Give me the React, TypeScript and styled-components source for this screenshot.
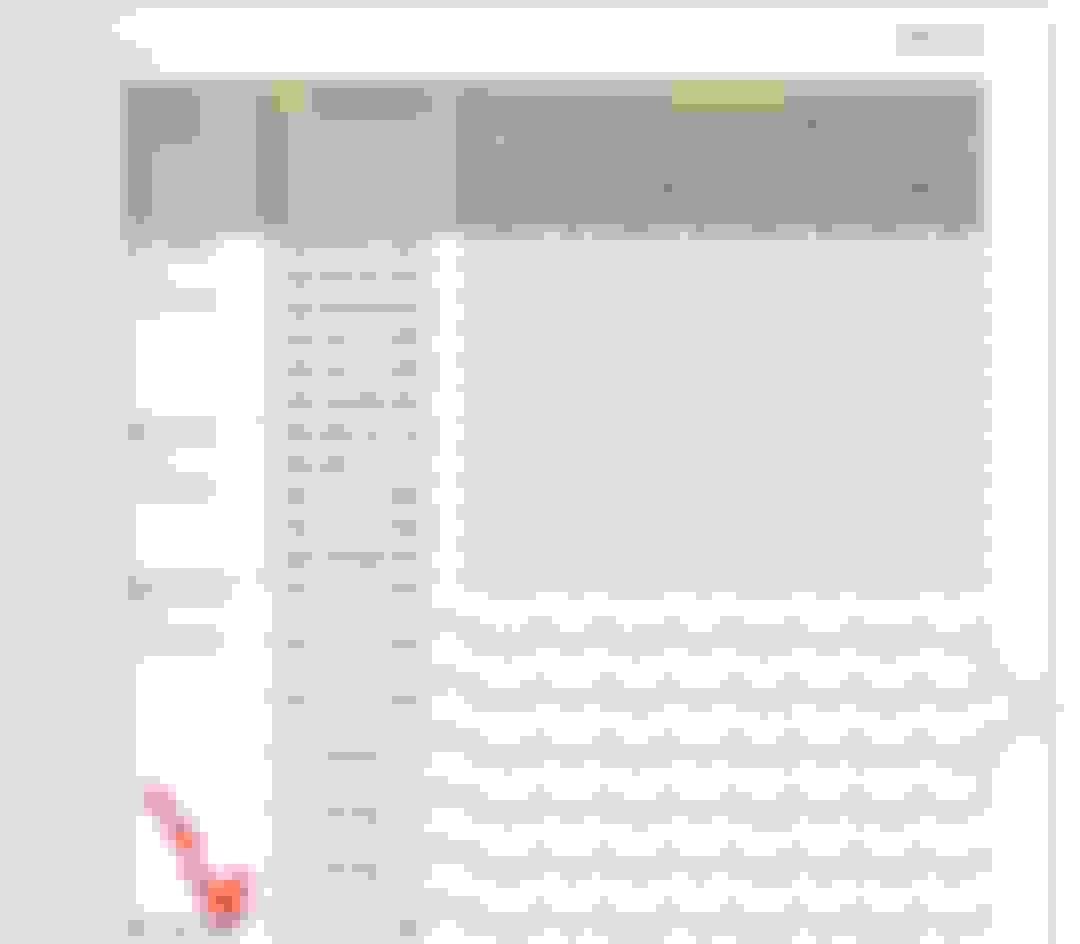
import React from "react";
import styled, { createGlobalStyle } from "styled-components";

type Row = number[];

/* Turns rows of [top, bottom, x0, x1, x2, x3, ...] into a stepped clip path. */
const cut = (rows: Row[], ox = 0, oy = 0): string => {
  let d = "";
  for (const [y0, y1, ...runs] of rows) {
    for (let i = 0; i < runs.length; i += 2) {
      d += `M${runs[i] - ox} ${y0 - oy}H${runs[i + 1] - ox}V${y1 - oy}H${runs[i] - ox}Z`;
    }
  }
  return `path("${d}")`;
};

const GREY = "#e0e0e0";
const MID = "#bebebe";
const DARK = "#a0a0a0";
const DOT = "#808080";

const Global = createGlobalStyle`
  html, body { margin: 0; padding: 0; background: #fff; font-family: "Liberation Sans", Arial, sans-serif; }
`;

const Page = styled.div`
  display: grid;
  grid-template-columns: 1048px 32px;
  width: 1080px;
  height: 944px;
  overflow: hidden;
  background: #fff;
`;

const Workspace = styled.div`
  display: flex;
  flex-direction: column;
  padding-top: 8px;
  background: ${GREY};
`;

const headerClip = cut([
  [0, 8, 24, 936],
  [8, 16, 8, 936],
  [16, 24, 0, 936],
  [24, 32, 8, 936],
  [32, 40, 24, 936],
  [40, 56, 40, 936],
  [56, 64, 48, 936],
]);

const Header = styled.header`
  display: flex;
  justify-content: flex-end;
  align-items: flex-start;
  box-sizing: border-box;
  width: 936px;
  height: 64px;
  margin-left: 112px;
  padding: 16px 64px 0 0;
  background: #fff;
  clip-path: ${headerClip};
`;

const SaveButton = styled.button`
  display: flex;
  align-items: flex-start;
  box-sizing: border-box;
  width: 88px;
  height: 32px;
  padding: 8px 0 0 16px;
  border: 0;
  background: ${GREY};
`;

const ButtonLabel = styled.span`
  display: block;
  width: 16px;
  height: 8px;
  background: ${MID};
`;

const Body = styled.div`
  display: flex;
  flex: 1;
  padding-left: 120px;
`;

const Content = styled.main`
  position: relative;
  display: flex;
  flex-direction: column;
  box-sizing: border-box;
  width: 872px;
  padding-top: 8px;
  &::before {
    content: "";
    position: absolute;
    top: 0;
    right: 0;
    width: 8px;
    height: 8px;
    background: #fff;
  }
`;

const Gutter = styled.div`
  flex: 1;
  background: #fff;
`;

const heroClip = cut(
  [
    [80, 88, 120, 976],
    [88, 232, 120, 984],
    [232, 240, 120, 216, 264, 432, 464, 544, 560, 584, 592, 680, 688, 808, 816, 928, 936, 968],
    [240, 248, 128, 152, 168, 200, 280, 368, 392, 416],
    [248, 256, 128, 136, 296, 304, 400, 408],
  ],
  120,
  80,
);

const Hero = styled.section`
  position: relative;
  z-index: 2;
  display: flex;
  align-items: flex-start;
  box-sizing: border-box;
  width: 864px;
  height: 176px;
  margin-bottom: -16px;
  padding: 8px 0 0 8px;
  background: ${MID};
  clip-path: ${heroClip};
`;

const tileClip = cut([
  [0, 8, 0, 64],
  [8, 48, 0, 72],
  [48, 56, 0, 64],
  [56, 64, 0, 32],
  [64, 128, 0, 24],
  [128, 136, 8, 16],
]);

const HeroPoster = styled.div`
  flex: none;
  width: 72px;
  height: 136px;
  background: ${DARK};
  clip-path: ${tileClip};
`;

const HeroBar = styled.div`
  flex: none;
  width: 32px;
  height: 128px;
  margin: 8px 0 0 56px;
  background: ${DARK};
  clip-path: ${cut([
    [0, 120, 0, 32],
    [120, 128, 8, 32],
  ])};
`;

const HeroTitle = styled.div`
  flex: none;
  width: 120px;
  height: 32px;
  margin-left: 24px;
  background: ${DARK};
  clip-path: ${cut([
    [0, 8, 0, 112],
    [8, 24, 0, 120],
    [24, 32, 8, 104],
  ])};
`;

const mainClip = cut(
  [
    [88, 96, 464, 488],
    [96, 136, 456, 976],
    [136, 152, 456, 968],
    [152, 224, 456, 976],
    [224, 232, 496, 512, 568, 576, 624, 648, 696, 704, 752, 776, 816, 832, 872, 896, 944, 960],
  ],
  456,
  88,
);

const HeroMain = styled.div`
  position: relative;
  flex: none;
  width: 520px;
  height: 144px;
  margin-left: 24px;
  background: ${DARK};
  clip-path: ${mainClip};
`;

const HeroDot = styled.i<{ $x: number; $y: number; $w?: number; $c?: string }>`
  position: absolute;
  left: ${(p) => p.$x}px;
  top: ${(p) => p.$y}px;
  width: ${(p) => p.$w ?? 8}px;
  height: 8px;
  background: ${(p) => p.$c ?? DOT};
`;

const Highlight = styled.div<{ $x: number; $w: number }>`
  position: absolute;
  left: ${(p) => p.$x}px;
  top: 0;
  width: ${(p) => p.$w}px;
  height: 32px;
  background: #c0ca88;
`;

const HighlightShade = styled.i<{ $top: number; $w: string }>`
  position: absolute;
  left: 0;
  bottom: 0;
  width: ${(p) => p.$w};
  height: ${(p) => 32 - p.$top}px;
  background: #a2aa6a;
`;

const Columns = styled.div`
  display: flex;
  flex: 1;
`;

const sideClip = cut(
  [
    [240, 248, 224, 256],
    [248, 256, 216, 264],
    [256, 264, 208, 264],
    [264, 280, 168, 264],
    [280, 288, 176, 264],
    [288, 312, 216, 264],
    [312, 320, 160, 264],
    [320, 408, 136, 264],
    [408, 416, 152, 264],
    [416, 424, 216, 256],
    [424, 448, 216, 264],
    [448, 456, 176, 264],
    [456, 464, 168, 264],
    [464, 472, 176, 264],
    [472, 480, 208, 264],
    [480, 496, 216, 264],
    [496, 504, 208, 264],
    [504, 560, 136, 264],
    [560, 568, 144, 264],
    [568, 576, 224, 256],
    [576, 584, 240, 256],
    [584, 592, 232, 264],
    [592, 600, 232, 272],
    [600, 608, 224, 272],
    [608, 624, 168, 272],
    [624, 632, 216, 272],
    [632, 648, 224, 264],
    [648, 656, 216, 272],
    [656, 664, 144, 272],
    [664, 688, 136, 272],
    [688, 704, 136, 264],
    [704, 744, 136, 272],
    [744, 760, 136, 264],
    [760, 776, 136, 272],
    [776, 784, 160, 272],
    [784, 800, 176, 272],
    [800, 808, 184, 264],
    [808, 816, 192, 264],
    [816, 832, 200, 272, 136, 152],
    [832, 848, 208, 272, 136, 160],
    [848, 856, 208, 272, 136, 168],
    [856, 864, 208, 264, 136, 176],
    [864, 872, 256, 264, 136, 176],
    [872, 880, 136, 176],
    [880, 888, 136, 184],
    [888, 896, 136, 184, 264, 272],
    [896, 904, 136, 192],
    [904, 912, 144, 192],
    [920, 928, 256, 264],
    [928, 936, 248, 264],
    [936, 944, 240, 272],
  ],
  120,
  240,
);

const Sidebar = styled.aside`
  position: relative;
  display: flex;
  flex-direction: column;
  align-items: flex-start;
  flex: none;
  box-sizing: border-box;
  width: 152px;
  padding-left: 8px;
  &::before {
    content: "";
    position: absolute;
    inset: 0;
    background: #fff;
    clip-path: ${sideClip};
  }
`;

const SideMark = styled.span<{ $top: number }>`
  position: relative;
  width: 16px;
  height: 16px;
  margin-top: ${(p) => p.$top}px;
  background: ${MID};
`;

const SideGlyph = styled.span<{ $top: number }>`
  position: relative;
  width: 24px;
  height: 24px;
  margin-top: ${(p) => p.$top}px;
  background: ${MID};
  clip-path: ${cut([
    [0, 8, 0, 8],
    [8, 16, 0, 24],
    [16, 24, 0, 16],
  ])};
`;

const TrailLayer = styled.svg`
  position: absolute;
  left: 24px;
  top: 544px;
  width: 112px;
  height: 152px;
  shape-rendering: crispEdges;
`;

const P = {
  v: "#ffe4f6",
  l: "#ffc8e0",
  m: "#e8a8c0",
  d: "#c88aa0",
  o: "#ff8066",
  a: "#ff9a80",
  x: "#d85f48",
  g: MID,
};

const trail: [number, keyof typeof P, number, number][] = [
  [784, "l", 144, 168], [784, "v", 168, 176],
  [792, "m", 144, 168], [792, "l", 168, 176],
  [800, "m", 144, 176],
  [808, "l", 144, 152], [808, "m", 152, 176],
  [816, "m", 160, 184], [816, "l", 184, 192],
  [824, "l", 160, 168], [824, "m", 168, 176], [824, "d", 176, 184], [824, "m", 184, 192],
  [832, "l", 160, 168], [832, "m", 168, 176], [832, "o", 176, 184], [832, "a", 184, 192], [832, "m", 192, 200], [832, "l", 200, 208],
  [840, "v", 160, 168], [840, "l", 168, 176], [840, "a", 176, 184], [840, "o", 184, 192], [840, "m", 192, 200], [840, "l", 200, 208],
  [848, "m", 176, 200], [848, "l", 200, 208],
  [856, "l", 176, 184], [856, "m", 184, 200], [856, "l", 200, 208],
  [864, "l", 176, 184], [864, "m", 184, 208], [864, "l", 208, 216], [864, "v", 216, 224], [864, "l", 224, 248], [864, "v", 248, 256],
  [872, "l", 176, 184], [872, "m", 184, 216], [872, "l", 216, 232], [872, "m", 232, 248], [872, "l", 248, 256],
  [880, "m", 192, 200], [880, "d", 200, 208], [880, "a", 208, 224], [880, "o", 224, 240], [880, "m", 240, 248], [880, "l", 248, 256],
  [888, "m", 192, 200], [888, "d", 200, 208], [888, "o", 208, 240], [888, "d", 240, 248], [888, "l", 248, 256],
  [896, "l", 192, 200], [896, "m", 200, 208], [896, "o", 208, 216], [896, "x", 216, 232], [896, "o", 232, 240], [896, "m", 240, 248], [896, "l", 248, 256],
  [904, "l", 192, 200], [904, "m", 200, 208], [904, "o", 208, 224], [904, "x", 224, 232], [904, "o", 232, 240], [904, "m", 240, 248], [904, "l", 248, 256],
  [912, "g", 200, 208], [912, "m", 208, 216], [912, "d", 216, 240], [912, "g", 240, 248],
  [920, "g", 200, 208], [920, "m", 208, 216], [920, "d", 216, 232], [920, "m", 232, 240],
  [928, "g", 176, 184], [928, "g", 208, 232],
];

const MidColumn = styled.div`
  display: flex;
  flex-direction: column;
  flex: none;
  box-sizing: border-box;
  width: 152px;
  padding-left: 16px;
`;

const ListRow = styled.div<{ $gap: number }>`
  display: grid;
  flex: none;
  grid-template-columns: repeat(16, 8px);
  grid-template-rows: repeat(3, 8px);
  margin-top: ${(p) => p.$gap}px;
`;

const Dash = styled.span<{ $from: number; $to: number; $row: number }>`
  grid-column: ${(p) => (p.$from - 288) / 8 + 1} / ${(p) => (p.$to - 288) / 8 + 1};
  grid-row: ${(p) => p.$row};
  background: ${MID};
`;

type DashDef = [number, number, number];
const pair: DashDef[] = [[288, 304, 2], [392, 416, 2]];
const twin: DashDef[] = [[328, 344, 2], [352, 376, 2], [368, 376, 3]];
const listRows: { gap: number; dashes: DashDef[] }[] = [
  { gap: 24, dashes: [[288, 312, 2], [320, 352, 2], [360, 376, 2], [392, 416, 2], [296, 304, 3]] },
  { gap: 8, dashes: [[288, 312, 2], [320, 416, 2], [296, 304, 3]] },
  { gap: 8, dashes: [[288, 312, 2], [328, 344, 2], [392, 416, 2], [400, 416, 1]] },
  { gap: 8, dashes: [[288, 312, 2], [328, 344, 2], [392, 416, 2], [296, 304, 1], [400, 416, 1]] },
  { gap: 8, dashes: [[288, 312, 2], [328, 384, 2], [392, 416, 2], [296, 304, 1], [360, 376, 1], [400, 408, 1]] },
  { gap: 8, dashes: [[288, 312, 2], [320, 352, 2], [368, 376, 2], [408, 416, 2], [288, 304, 1], [328, 344, 1]] },
  { gap: 8, dashes: [[288, 304, 1], [328, 344, 1], [288, 312, 2], [320, 344, 2]] },
  { gap: 8, dashes: [[288, 304, 1], [392, 416, 1], [288, 304, 2], [392, 416, 2]] },
  { gap: 8, dashes: [[288, 304, 1], [392, 416, 1], [296, 304, 2], [400, 416, 2]] },
  { gap: 8, dashes: [[288, 312, 1], [328, 384, 1], [392, 416, 1], [288, 304, 2], [360, 376, 2]] },
  { gap: 0, dashes: pair },
  { gap: 32, dashes: pair },
  { gap: 32, dashes: pair },
  { gap: 32, dashes: [[328, 376, 2]] },
  { gap: 32, dashes: twin },
  { gap: 32, dashes: twin },
  { gap: 40, dashes: [[400, 416, 1], [400, 416, 2]] },
];

const RightColumn = styled.div`
  display: flex;
  flex-direction: column;
  flex: none;
  width: 568px;
  background: #fff;
`;

const within = (y: number, ranges: number[][]) => ranges.some(([a, b]) => y >= a && y < b);

const stripWide = [[248, 256], [272, 288], [336, 352], [392, 416], [456, 472], [488, 504], [552, 568], [584, 600]];
const toothOut = [[240, 248], [256, 272], [288, 304], [320, 336], [352, 368], [384, 392], [416, 424], [440, 456], [472, 488], [504, 520], [536, 552], [568, 584]];
const edgeIn = [[248, 256], [272, 288], [304, 312], [336, 344], [368, 376], [400, 408], [432, 440], [464, 472], [488, 504], [520, 536], [552, 568], [584, 592]];

const panelRows: Row[] = [];
for (let y = 240; y < 592; y += 8) {
  const a = within(y, stripWide) ? 432 : 440;
  const b = within(y, toothOut) ? 456 : 464;
  const c = within(y, edgeIn) ? 984 : 992;
  panelRows.push([y, y + 8, 424, a, b, c]);
}
panelRows.push([592, 600, 424, 432, 488, 536, 568, 584, 608, 664, 696, 712, 736, 792, 816, 840, 856, 920, 944, 960]);
panelRows.push([600, 608, 424, 432]);

const Panel = styled.section`
  flex: none;
  width: 568px;
  height: 368px;
  background: ${GREY};
  clip-path: ${cut(panelRows, 424, 240)};
`;

const WaveRow = styled.div<{ $clip: string }>`
  position: relative;
  z-index: 1;
  flex: none;
  width: 640px;
  height: 56px;
  background: ${GREY};
  clip-path: ${(p) => p.$clip};
`;

const bands: number[][][] = [
  [
    [424, 456],
    [424, 480, 528, 552, 592, 616, 664, 680, 720, 744, 784, 800, 848, 864, 912, 928, 976, 984],
    [424, 496, 504, 512, 520, 560, 584, 624, 632, 688, 712, 808, 840, 936, 960, 992],
    [424, 440, 456, 992],
    [424, 432, 464, 992],
    [424, 432, 472, 536, 560, 584, 608, 664, 688, 712, 736, 792, 816, 840, 856, 920, 944, 1000],
    [424, 432, 504, 512, 632, 640, 760, 768, 880, 896, 968, 1000],
  ],
  [
    [424, 456, 976, 1008],
    [424, 480, 536, 544, 600, 616, 664, 672, 728, 744, 784, 800, 848, 864, 912, 928, 968, 1016, 1040, 1048],
    [424, 488, 520, 552, 592, 624, 656, 680, 720, 752, 776, 808, 840, 872, 904, 936, 968, 1048],
    [424, 448, 456, 1048],
    [424, 432, 464, 992, 1008, 1048],
    [424, 432, 472, 536, 560, 584, 600, 664, 688, 712, 736, 792, 816, 840, 856, 920, 936, 968, 1008, 1048],
    [424, 432, 632, 648, 760, 768, 784, 792, 880, 896, 1008, 1048],
  ],
  [
    [424, 456, 984, 1048],
    [424, 480, 536, 544, 600, 616, 664, 672, 728, 744, 784, 800, 848, 864, 912, 928, 976, 1048],
    [424, 488, 520, 552, 592, 624, 648, 680, 720, 752, 776, 808, 840, 872, 904, 936, 960, 1016, 1040, 1048],
    [424, 1008],
    [424, 432, 464, 1000],
    [424, 432, 472, 544, 560, 584, 600, 672, 696, 712, 728, 800, 816, 840, 848, 920, 936, 1000],
    [504, 512, 632, 640, 784, 792, 856, 864, 952, 992],
  ],
  [
    [424, 448, 976, 992],
    [424, 480, 536, 544, 600, 608, 664, 672, 728, 736, 784, 800, 848, 864, 912, 928, 976, 992],
    [424, 488, 528, 552, 592, 624, 656, 680, 720, 752, 776, 808, 840, 872, 904, 936, 968, 992],
    [424, 992],
    [424, 432, 464, 984],
    [424, 432, 472, 544, 560, 584, 600, 672, 688, 712, 728, 800, 808, 840, 848, 920, 936, 968],
    [504, 512, 632, 648, 752, 792, 856, 864, 880, 904],
  ],
  [
    [424, 448],
    [424, 480, 536, 544, 600, 608, 664, 672, 728, 736, 792, 800, 848, 864, 912, 920],
    [424, 488, 528, 552, 592, 616, 656, 680, 720, 744, 776, 808, 840, 872, 904, 936, 968, 992],
    [424, 992],
    [424, 432, 464, 992],
    [424, 432, 472, 544, 560, 592, 600, 672, 688, 712, 728, 800, 808, 928, 936, 976],
    [496, 520, 568, 576, 632, 648, 696, 704, 752, 792, 816, 832, 856, 864, 880, 912, 944, 960],
  ],
  [
    [424, 448],
    [424, 480, 536, 544, 600, 608, 664, 672, 728, 736, 792, 800, 856, 864, 912, 920],
    [424, 488, 528, 552, 592, 616, 656, 680, 720, 744, 784, 808, 840, 872, 904, 928, 976, 992],
    [424, 992],
    [424, 440, 456, 992],
    [424, 432, 464, 544, 560, 584, 592, 672, 688, 800, 808, 928, 936, 984],
    [496, 528, 568, 576, 608, 664, 696, 712, 736, 792, 816, 832, 856, 920, 944, 960],
  ],
];

const bandClip = (rows: number[][]) =>
  cut(rows.map((runs, i) => [i * 8, i * 8 + 8, ...runs]), 424, 0);

const Rail = styled.div`
  display: flex;
  padding-top: 24px;
  background: #fff;
`;

const RailLine = styled.div`
  position: relative;
  width: 8px;
  height: 920px;
  background: ${GREY};
`;

const RailThumb = styled.i`
  position: absolute;
  left: 8px;
  top: 680px;
  width: 8px;
  height: 8px;
  background: ${GREY};
`;

export default function App() {
  return (
    <Page>
      <Global />
      <Workspace>
        <Header>
          <SaveButton type="button" aria-label="action">
            <ButtonLabel />
          </SaveButton>
        </Header>
        <Body>
          <Content>
            <Hero>
              <HeroPoster />
              <HeroBar />
              <HeroTitle />
              <HeroMain>
                <HeroDot $x={352} $y={32} />
                <HeroDot $x={208} $y={96} />
                <HeroDot $x={456} $y={96} $w={16} />
                <HeroDot $x={40} $y={48} $c={MID} />
              </HeroMain>
              <Highlight $x={152} $w={32}>
                <HighlightShade $top={16} $w="8px" />
              </Highlight>
              <Highlight $x={552} $w={112}>
                <HighlightShade $top={24} $w="100%" />
              </Highlight>
            </Hero>
            <Columns>
              <Sidebar>
                <SideMark $top={184} />
                <SideGlyph $top={136} />
                <SideMark $top={320} />
                <TrailLayer viewBox="144 784 112 152">
                  {trail.map(([y, c, a, b]) => (
                    <rect key={`${y}-${a}`} x={a} y={y} width={b - a} height={8} fill={P[c]} />
                  ))}
                </TrailLayer>
              </Sidebar>
              <MidColumn>
                {listRows.map((row, i) => (
                  <ListRow key={i} $gap={row.gap}>
                    {row.dashes.map(([a, b, r], j) => (
                      <Dash key={j} $from={a} $to={b} $row={r} />
                    ))}
                  </ListRow>
                ))}
              </MidColumn>
              <RightColumn>
                <Panel />
                {bands.map((rows, i) => (
                  <WaveRow key={i} $clip={bandClip(rows)} />
                ))}
              </RightColumn>
            </Columns>
          </Content>
          <Gutter />
        </Body>
      </Workspace>
      <Rail>
        <RailLine>
          <RailThumb />
        </RailLine>
      </Rail>
    </Page>
  );
}
